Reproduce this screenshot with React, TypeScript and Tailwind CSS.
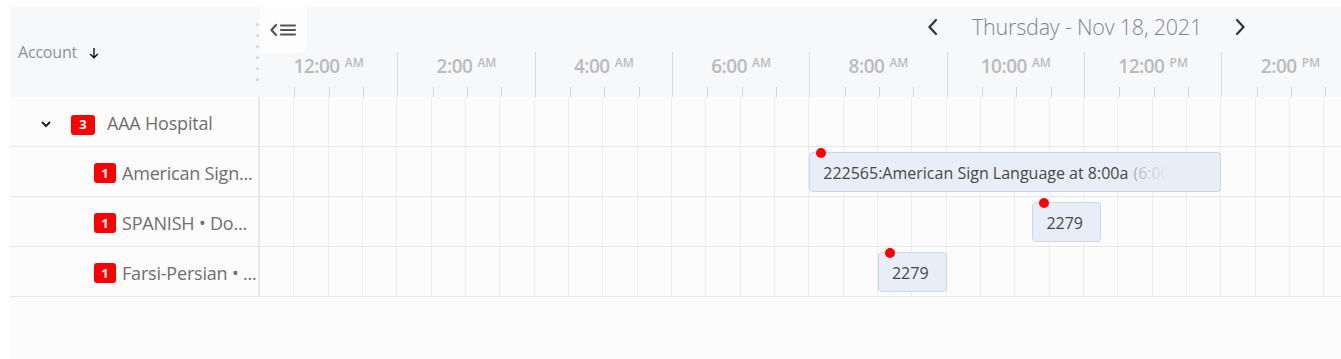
import React from "react";

const SLOT = 34.33;
const HOUR = SLOT * 2;

const labels = [
  ["12:00", "AM"], ["2:00", "AM"], ["4:00", "AM"], ["6:00", "AM"], ["8:00", "AM"], ["10:00", "AM"],
  ["12:00", "PM"], ["2:00", "PM"],
];

function Badge({ n, wide }: { n: number; wide?: boolean }) {
  return (
    <span
      className={`inline-flex items-center justify-center h-[20px] ${wide ? "w-[24px]" : "w-[22px]"} rounded-[3px] bg-[#f00] text-white text-[13px] font-bold leading-none shrink-0`}
    >
      {n}
    </span>
  );
}

function Grid() {
  return (
    <div className="flex h-full">
      {Array.from({ length: 32 }).map((_, i) => (
        <div key={i} className="w-[34.33px] shrink-0 h-full border-r border-[#ededed]" />
      ))}
    </div>
  );
}

type Ev = { start: number; end: number; text: React.ReactNode };

function Event({ ev }: { ev: Ev }) {
  return (
    <div
      className="absolute top-[5px] h-[40px]"
      style={{ left: ev.start * HOUR, width: (ev.end - ev.start) * HOUR }}
    >
      <div className="w-full h-full rounded-[4px] border border-[#ccd6e4] bg-[#e8eef8] overflow-hidden flex items-center pl-[13px] pt-[2px] text-[16px] text-[#474747] whitespace-nowrap">
        {ev.text}
      </div>
      <div className="absolute left-[7px] top-[-4px] w-[10px] h-[10px] rounded-full bg-[#f00]" />
    </div>
  );
}

function Row({ left, ev }: { left: React.ReactNode; ev?: Ev }) {
  return (
    <div className="flex h-[50px] border-b border-[#e6e6e6]">
      <div className="w-[250px] shrink-0 border-r-2 border-[#e8e8e8] flex items-center pt-[3px] overflow-hidden">
        {left}
      </div>
      <div className="relative flex-1 overflow-hidden">
        <Grid />
        {ev && <Event ev={ev} />}
      </div>
    </div>
  );
}

function Child({ label }: { label: string }) {
  return (
    <div className="flex items-center pl-[84px] min-w-0">
      <Badge n={1} />
      <span className="ml-[6px] text-[18px] text-[#6e6e6e] whitespace-nowrap tracking-[-0.2px]">{label}</span>
    </div>
  );
}

export default function App() {
  const font = { fontFamily: "'Open Sans', 'Noto Sans', sans-serif" };
  return (
    <div className="w-[1341px] h-[359px] bg-white pt-[7px] pl-[10px] overflow-hidden" style={font}>
      <div className="flex flex-col h-full bg-[#fcfcfc]">
        {/* header */}
        <div className="flex h-[90px] bg-[#f7f8fa] shrink-0">
          <div className="w-[250px] shrink-0 flex items-center justify-between">
            <div className="flex items-center pl-[8px] gap-[12px]">
              <span className="text-[16px] text-[#8b9199] tracking-[-0.2px]">Account</span>
              <svg width="10" height="12" viewBox="0 0 10 12" className="mt-[2px]">
                <path d="M5 1 V10.5 M1.2 7 L5 10.8 L8.8 7" stroke="#111" strokeWidth="1.4" fill="none" />
              </svg>
            </div>
            <div className="flex flex-col gap-[8px] mr-[1px]">
              {Array.from({ length: 6 }).map((_, i) => (
                <span key={i} className="w-[3px] h-[3px] rounded-full bg-[#c9d8e2]" />
              ))}
            </div>
          </div>
          <div className="flex-1 flex flex-col overflow-hidden">
            <div className="h-[45px] flex items-start">
              <button className="w-[47px] h-[46px] bg-[#fdfdfe] rounded-br-[8px] flex items-center justify-center shrink-0">
                <svg width="30" height="18" viewBox="0 0 30 18">
                  <path d="M7 4 L2.5 9 L7 14" stroke="#555" strokeWidth="2.2" fill="none" strokeLinecap="round" strokeLinejoin="round" />
                  <path d="M12 4.5 H26 M12 9 H26 M12 13.5 H26" stroke="#555" strokeWidth="2.2" strokeLinecap="round" />
                </svg>
              </button>
              <div className="flex-1 flex items-center justify-end pr-[95px] h-[40px]">
                <svg width="12" height="20" viewBox="0 0 12 20">
                  <path d="M9 3 L2.5 10 L9 17" stroke="#333" strokeWidth="2.2" fill="none" strokeLinecap="round" />
                </svg>
                <span className="ml-[33px] mr-[32px] text-[21.5px] text-[#7b8694] tracking-[-0.2px] font-light">
                  Thursday - Nov 18, 2021
                </span>
                <svg width="12" height="20" viewBox="0 0 12 20">
                  <path d="M3 3 L9.5 10 L3 17" stroke="#333" strokeWidth="2.2" fill="none" strokeLinecap="round" />
                </svg>
              </div>
            </div>
            <div className="h-[45px] flex">
              {labels.map(([t, m], i) => (
                <div
                  key={i}
                  className={`w-[137.33px] shrink-0 flex flex-col ${i === 0 ? "" : "border-l border-[#d9d9d9]"}`}
                >
                  <div className="h-[35px] flex items-start justify-center">
                    <span className="text-[19px] font-semibold text-[#bbbbbb] tracking-[-0.5px]">{t}</span>
                    <span className="text-[12px] font-semibold text-[#bbbbbb] ml-[5px] mt-[2px]">{m}</span>
                  </div>
                  <div className="h-[10px] flex">
                    {[0, 1, 2, 3].map((k) => (
                      <div key={k} className={`w-[34.33px] shrink-0 ${k === 0 ? "" : "border-l border-[#d4d4d4]"}`} />
                    ))}
                  </div>
                </div>
              ))}
            </div>
          </div>
        </div>
        {/* rows */}
        <Row
          left={
            <div className="flex items-center pl-[30px]">
              <svg width="12" height="8" viewBox="0 0 12 8" className="mt-[1px]">
                <path d="M2 2 L6 6 L10 2" stroke="#222" strokeWidth="2" fill="none" />
              </svg>
              <span className="ml-[19px]"><Badge n={3} wide /></span>
              <span className="ml-[12px] text-[18px] text-[#6e6e6e] tracking-[-0.2px]">AAA Hospital</span>
            </div>
          }
        />
        <Row
          left={<Child label="American Sign..." />}
          ev={{
            start: 8,
            end: 14,
            text: (
              <>
                <span>222565:American Sign Language at 8:00a</span>
                <span className="ml-[5px] text-transparent bg-clip-text bg-gradient-to-r from-[#aaaaaa] to-[#f0f0f0]">(6:00</span>
              </>
            ),
          }}
        />
        <Row left={<Child label="SPANISH • Do..." />} ev={{ start: 11.25, end: 12.25, text: <span>2279</span> }} />
        <Row left={<Child label="Farsi-Persian • ..." />} ev={{ start: 9, end: 10, text: <span>2279</span> }} />
      </div>
    </div>
  );
}
